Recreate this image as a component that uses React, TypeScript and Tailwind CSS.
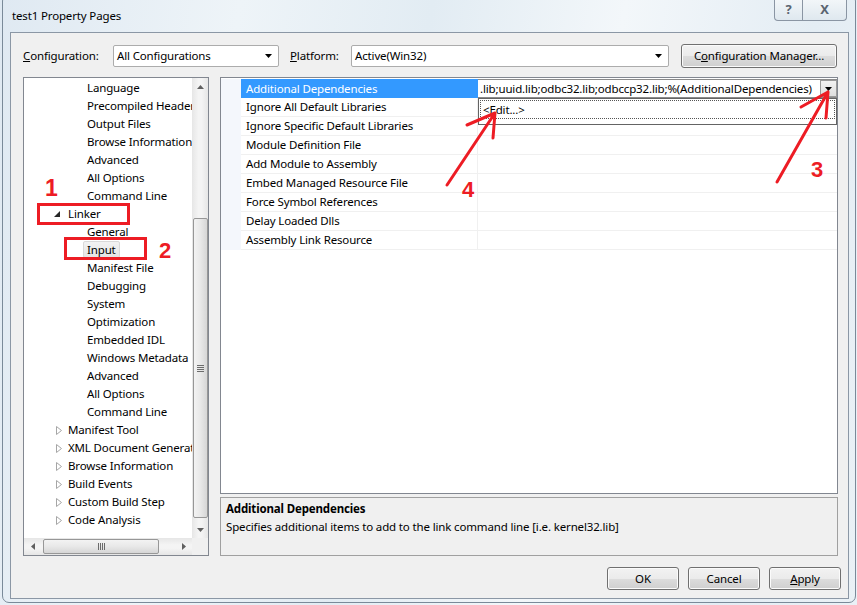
import React from 'react';

type TreeItem = {
  label: string;
  kind: 'child' | 'open' | 'closed';
  selected?: boolean;
};

const treeItems: TreeItem[] = [
  { label: 'Language', kind: 'child' },
  { label: 'Precompiled Headers', kind: 'child' },
  { label: 'Output Files', kind: 'child' },
  { label: 'Browse Information', kind: 'child' },
  { label: 'Advanced', kind: 'child' },
  { label: 'All Options', kind: 'child' },
  { label: 'Command Line', kind: 'child' },
  { label: 'Linker', kind: 'open' },
  { label: 'General', kind: 'child' },
  { label: 'Input', kind: 'child', selected: true },
  { label: 'Manifest File', kind: 'child' },
  { label: 'Debugging', kind: 'child' },
  { label: 'System', kind: 'child' },
  { label: 'Optimization', kind: 'child' },
  { label: 'Embedded IDL', kind: 'child' },
  { label: 'Windows Metadata', kind: 'child' },
  { label: 'Advanced', kind: 'child' },
  { label: 'All Options', kind: 'child' },
  { label: 'Command Line', kind: 'child' },
  { label: 'Manifest Tool', kind: 'closed' },
  { label: 'XML Document Generator', kind: 'closed' },
  { label: 'Browse Information', kind: 'closed' },
  { label: 'Build Events', kind: 'closed' },
  { label: 'Custom Build Step', kind: 'closed' },
  { label: 'Code Analysis', kind: 'closed' },
];

const properties = [
  'Additional Dependencies',
  'Ignore All Default Libraries',
  'Ignore Specific Default Libraries',
  'Module Definition File',
  'Add Module to Assembly',
  'Embed Managed Resource File',
  'Force Symbol References',
  'Delay Loaded Dlls',
  'Assembly Link Resource',
];

const DownArrow = () => (
  <svg width="7" height="4" viewBox="0 0 7 4">
    <path d="M0 0h7L3.5 4z" fill="#000" />
  </svg>
);

const Combo = ({ className, text }: { className: string; text: string }) => (
  <div
    className={`h-[22px] flex items-center justify-between pl-[3px] pr-[6px] bg-white border border-[#acacac] rounded-[2px] ${className}`}
  >
    <span>{text}</span>
    <DownArrow />
  </div>
);

const Button = ({ className, children }: { className: string; children: React.ReactNode }) => (
  <div
    className={`h-[23px] flex items-center justify-center rounded-[3px] border border-[#707070] shadow-[inset_0_0_0_1px_#fbfbfb] bg-[linear-gradient(to_bottom,#f2f2f2_0%,#ebebeb_50%,#dddddd_51%,#cfcfcf_100%)] ${className}`}
  >
    {children}
  </div>
);

const ScrollArrow = ({ dir }: { dir: 'up' | 'down' | 'left' | 'right' }) => {
  const d = {
    up: 'M0 4h7L3.5 0z',
    down: 'M0 0h7L3.5 4z',
    left: 'M4 0v7L0 3.5z',
    right: 'M0 0v7L4 3.5z',
  }[dir];
  const vertical = dir === 'up' || dir === 'down';
  return (
    <svg width={vertical ? 7 : 4} height={vertical ? 4 : 7} viewBox={vertical ? '0 0 7 4' : '0 0 4 7'}>
      <path d={d} fill="#606060" />
    </svg>
  );
};

const Grip = ({ vertical }: { vertical: boolean }) =>
  vertical ? (
    <div className="flex flex-col gap-[1px]">
      {[0, 1, 2, 3].map((i) => (
        <div key={i} className="w-[7px] h-[1px] bg-[#6b6b6b]" />
      ))}
    </div>
  ) : (
    <div className="flex gap-[1px]">
      {[0, 1, 2, 3].map((i) => (
        <div key={i} className="w-[1px] h-[7px] bg-[#6b6b6b]" />
      ))}
    </div>
  );

const Tree = () => (
  <div className="w-[186px] h-[479px] shrink-0 border border-[#828790] bg-white flex flex-col">
    <div className="flex h-[460px]">
      <div className="w-[168px] shrink-0 overflow-hidden pt-[1px]">
        {treeItems.map((item, i) => (
          <div key={i} className="h-[18px] flex items-center whitespace-nowrap">
            {item.kind === 'child' ? (
              <div className="pl-[59px]">
                <span
                  className={
                    item.selected
                      ? 'inline-block px-[3px] leading-[15px] rounded-[2px] border border-[#d9d9d9] bg-[linear-gradient(to_bottom,#f2f2f2,#e5e5e5)]'
                      : 'inline-block px-[4px]'
                  }
                >
                  {item.label}
                </span>
              </div>
            ) : (
              <div className="pl-[30px] flex items-center">
                <div className="w-[14px] flex items-center">
                  {item.kind === 'open' ? (
                    <svg width="6" height="6" viewBox="0 0 6 6">
                      <path d="M6 0v6H0z" fill="#262626" />
                    </svg>
                  ) : (
                    <svg width="6" height="9" viewBox="0 0 6 9" className="ml-[2px]">
                      <path d="M0.5 0.5v8L5.5 4.5z" fill="none" stroke="#a6a6a6" />
                    </svg>
                  )}
                </div>
                <span>{item.label}</span>
              </div>
            )}
          </div>
        ))}
      </div>
      <div className="w-[16px] shrink-0 bg-[linear-gradient(to_right,#e6e6e6,#f4f4f4_40%,#f4f4f4_60%,#e6e6e6)] flex flex-col items-center">
        <div className="h-[17px] flex items-center justify-center">
          <ScrollArrow dir="up" />
        </div>
        <div className="mt-[123px] w-[15px] h-[300px] rounded-[2px] border border-[#979797] bg-[linear-gradient(to_right,#f3f3f3,#e8e8e8_50%,#d6d6d6)] flex items-center justify-center">
          <Grip vertical />
        </div>
        <div className="flex-1" />
        <div className="h-[17px] flex items-center justify-center">
          <ScrollArrow dir="down" />
        </div>
      </div>
    </div>
    <div className="flex h-[17px]">
      <div className="w-[168px] flex items-center bg-[linear-gradient(to_bottom,#e6e6e6,#f4f4f4_40%,#f4f4f4_60%,#e6e6e6)]">
        <div className="w-[17px] flex justify-center">
          <ScrollArrow dir="left" />
        </div>
        <div className="ml-[2px] w-[116px] h-[15px] rounded-[2px] border border-[#979797] bg-[linear-gradient(to_bottom,#f3f3f3,#e8e8e8_50%,#d6d6d6)] flex items-center justify-center">
          <Grip vertical={false} />
        </div>
        <div className="flex-1" />
        <div className="w-[17px] flex justify-center">
          <ScrollArrow dir="right" />
        </div>
      </div>
      <div className="w-[16px] bg-[#f0f0f0]" />
    </div>
  </div>
);

const PropertyGrid = () => (
  <div className="h-[417px] border border-[#828790] bg-white relative pt-[1px]">
    {properties.map((name, i) => (
      <div key={name} className="h-[19px] flex">
        <div className="w-[20px] shrink-0 bg-[#f4f7fc]" />
        <div
          className={
            i === 0
              ? 'w-[237px] shrink-0 flex items-center pl-[5px] bg-[#3399ff] text-white'
              : 'w-[237px] shrink-0 flex items-center pl-[5px] border-b border-r border-[#f0f0f0]'
          }
        >
          {name}
        </div>
        {i === 0 ? (
          <div className="flex-1 min-w-0 flex border-y border-[#8a8a8a] bg-white">
            <div className="flex-1 min-w-0 flex items-center pl-[2px] overflow-hidden whitespace-nowrap">
              .lib;uuid.lib;odbc32.lib;odbccp32.lib;%(AdditionalDependencies)
            </div>
            <div className="w-[17px] shrink-0 border border-[#9a9a9a] bg-[linear-gradient(to_bottom,#f2f2f2,#dedede)] flex items-center justify-center">
              <DownArrow />
            </div>
          </div>
        ) : (
          <div className="flex-1 border-b border-[#f0f0f0]" />
        )}
      </div>
    ))}
    <div className="absolute left-[257px] top-[20px] w-[359px] h-[27px] border border-[#646464] bg-white p-[1px]">
      <div className="h-[19px] flex items-center pl-[2px] border border-dotted border-[#555555]">&lt;Edit...&gt;</div>
    </div>
  </div>
);

export default function App() {
  return (
    <div className="w-[857px] h-[605px] relative overflow-hidden text-[11.5px] tracking-[-0.15px] text-black font-['Noto_Sans',sans-serif] bg-[linear-gradient(100deg,#dfe9f2_0%,#eef4f8_25%,#e2ecf3_45%,#f3f7fa_65%,#e4edf4_85%,#eaf1f6_100%)]">
      <div className="absolute left-[2px] top-[-6px] w-[854px] h-[609px] rounded-[7px] border border-[#7a8a99]" />
      <div className="h-[32px] flex items-center pl-[12px] pb-[1px] relative">
        <span>test1 Property Pages</span>
        <div className="absolute right-[10px] top-0 flex">
          <div className="w-[29px] h-[21px] rounded-bl-[4px] border border-t-0 border-[#8a95a3] bg-[linear-gradient(to_bottom,#f2f6f9,#dfe8ef)] flex items-center justify-center text-[13px] text-[#5a6470] font-bold">
            ?
          </div>
          <div className="w-[44px] h-[21px] rounded-br-[4px] border border-t-0 border-l-0 border-[#8a95a3] bg-[linear-gradient(to_bottom,#f2f6f9,#dfe8ef)] flex items-center justify-center text-[13px] text-[#5a6470] font-bold">
            X
          </div>
        </div>
      </div>

      <div className="ml-[10px] w-[839px] h-[567px] border border-[#8b97a5] bg-[#f0f0f0] flex flex-col">
        <div className="mt-[11px] h-[24px] flex items-center pl-[12px]">
          <span className="w-[90px] shrink-0">
            <span className="underline">C</span>onfiguration:
          </span>
          <Combo className="w-[166px] shrink-0" text="All Configurations" />
          <span className="ml-[11px] w-[61px] shrink-0">
            <span className="underline">P</span>latform:
          </span>
          <Combo className="w-[318px] shrink-0" text="Active(Win32)" />
          <Button className="ml-[12px] w-[156px] h-[24px] shrink-0">
            <span>
              C<span className="underline">o</span>nfiguration Manager...
            </span>
          </Button>
        </div>

        <div className="mt-[9px] flex pl-[12px]">
          <Tree />
          <div className="ml-[11px] w-[618px] shrink-0 flex flex-col gap-[3px]">
            <PropertyGrid />
            <div className="h-[59px] border border-[#a0a0a0] bg-[#f0f0f0] px-[5px] pt-[2px]">
              <div className="font-bold leading-[18px]">Additional Dependencies</div>
              <div className="leading-[17px]">
                Specifies additional items to add to the link command line [i.e. kernel32.lib]
              </div>
            </div>
          </div>
        </div>

        <div className="mt-[11px] flex justify-end pr-[7px] gap-[9px]">
          <Button className="w-[72px]">OK</Button>
          <Button className="w-[72px]">Cancel</Button>
          <Button className="w-[72px]">
            <span>
              <span className="underline">A</span>pply
            </span>
          </Button>
        </div>
      </div>

      {/* annotations */}
      <div className="absolute left-[37px] top-[203px] w-[93px] h-[22px] border-[3px] border-[#ed1c24]" />
      <div className="absolute left-[64px] top-[237px] w-[83px] h-[23px] border-[3px] border-[#ed1c24]" />
      <span className="absolute left-[45px] top-[176px] text-[23px] leading-[24px] font-bold text-[#ed1c24] font-['Liberation_Sans',sans-serif]">1</span>
      <span className="absolute left-[159px] top-[239px] text-[22px] leading-[24px] font-bold text-[#ed1c24] font-['Liberation_Sans',sans-serif]">2</span>
      <span className="absolute left-[811px] top-[158px] text-[22px] leading-[24px] font-bold text-[#ed1c24] font-['Liberation_Sans',sans-serif]">3</span>
      <span className="absolute left-[462px] top-[178px] text-[22px] leading-[24px] font-bold text-[#ed1c24] font-['Liberation_Sans',sans-serif]">4</span>
      <svg className="absolute left-0 top-0 pointer-events-none" width="857" height="605" viewBox="0 0 857 605">
        <g stroke="#ed1c24" strokeWidth="3" strokeLinecap="round" fill="none">
          <path d="M447 185L495 113M495 113L467 125M495 113L493 138" />
          <path d="M777 182L828 92M828 92L801 107M828 92L826 118" />
        </g>
      </svg>
    </div>
  );
}
